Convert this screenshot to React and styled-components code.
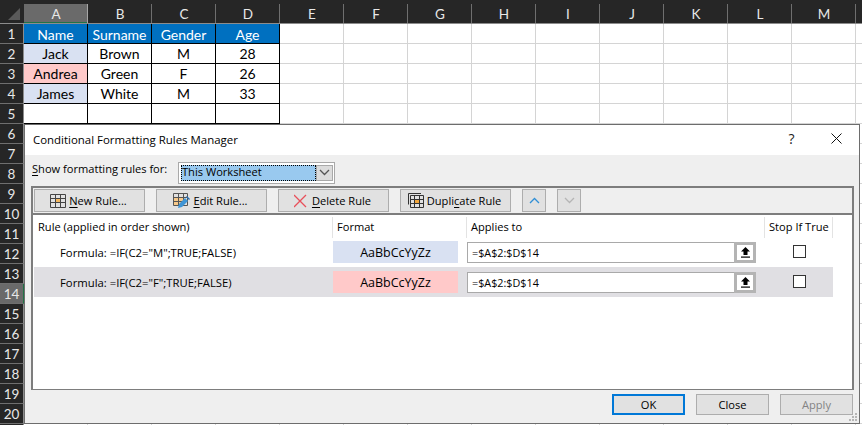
import React from "react";
import styled, { createGlobalStyle } from "styled-components";

const GlobalStyle = createGlobalStyle`
  html, body { margin: 0; padding: 0; background: #fff; overflow: hidden; }
  body { width: 862px; height: 425px; position: relative; font-family: "Open Sans", "Noto Sans", sans-serif; }
`;

const Sheet = styled.div`
  display: grid;
  grid-template-columns: 24px repeat(14, 64px);
  grid-template-rows: 24px repeat(21, 20px);
  width: 862px;
  height: 425px;
  overflow: hidden;
  background: #fff;
`;
const Corner = styled.div`
  background: #262626;
  border-bottom: 1px solid #8c8c8c;
  box-sizing: border-box;
  position: relative;
  &::after {
    content: "";
    position: absolute;
    right: 4px;
    bottom: 3px;
    border-style: solid;
    border-width: 0 0 12px 12px;
    border-color: transparent transparent #5a5a5a transparent;
  }
`;
const ColumnHead = styled.div`
  box-sizing: border-box;
  padding-top: 4px;
  background: #262626;
  border-bottom: 1px solid #8c8c8c;
  font-family: "Lato", sans-serif;
  font-size: 13.5px;
  color: #e8e8e8;
  display: flex;
  align-items: center;
  justify-content: center;
  position: relative;
  ${(p) => p.$active && `
    &::before {
      content: "";
      position: absolute;
      left: 0; right: 0; top: 4px; bottom: 0;
      background: #6a6a6a;
      border-bottom: 1px solid #217346;
    }
  `}
  &::after {
    content: "";
    position: absolute;
    right: 0;
    top: 4px;
    bottom: 0;
    width: 1px;
    background: ${(p) => (p.$active ? "#a6a6a6" : "#6f6f6f")};
  }
  span { position: relative; z-index: 1; }
`;
const RowHead = styled.div`
  background: ${(p) => (p.$active ? "#6a6a6a" : "#262626")};
  border-bottom: 1px solid #6f6f6f;
  border-right: 1px solid ${(p) => (p.$active ? "#217346" : "#8c8c8c")};
  box-sizing: border-box;
  font-family: "Lato", sans-serif;
  font-size: 13.5px;
  color: #e8e8e8;
  display: flex;
  align-items: center;
  justify-content: center;
`;
const Cell = styled.div`
  box-sizing: border-box;
  border-right: 1px solid ${(p) => (p.$table ? "#000" : "#d4d4d4")};
  border-bottom: 1px solid ${(p) => (p.$table ? "#000" : "#d4d4d4")};
  background: ${(p) => p.$bg || "#fff"};
  color: ${(p) => p.$color || "#000"};
  font-family: "Lato", sans-serif;
  font-size: 14px;
  padding-top: ${(p) => (p.$head ? 1 : 0)}px;
  display: flex;
  align-items: center;
  justify-content: center;
  white-space: nowrap;
`;

const Dialog = styled.div`
  position: absolute;
  left: 24px;
  top: 124px;
  width: 836px;
  height: 300px;
  box-sizing: border-box;
  border: 1px solid #6d6d6d;
  background: #efefef;
  font-size: 11.1px;
  color: #000;
  display: flex;
  flex-direction: column;
`;
const TitleBar = styled.div`
  height: 30px;
  flex: none;
  background: #fff;
  display: flex;
  align-items: center;
  padding-left: 8px;
  font-size: 11.45px;
`;
const Title = styled.div`
  flex: 1;
  position: relative;
  top: -1px;
`;
const TitleButton = styled.div`
  width: 45px;
  display: flex;
  align-items: center;
  justify-content: center;
  font-size: 14px;
  color: #222;
  padding-bottom: 4px;
  margin-left: ${(p) => (p.$help ? -1 : 0)}px;
`;
const DialogBody = styled.div`
  flex: 1;
  display: flex;
  flex-direction: column;
  padding: 0 5px 0 6px;
  position: relative;
`;
const ShowRow = styled.div`
  height: 31px;
  flex: none;
  display: flex;
  align-items: center;
  padding: 0 0 0 1px;
  gap: 21px;
`;
const Label = styled.span`
  width: 125px;
  white-space: nowrap;
  position: relative;
  top: -2px;
  u { text-underline-offset: 2px; }
`;
const Select = styled.div`
  width: 157px;
  height: 22px;
  box-sizing: border-box;
  border: 1px solid #a9a9a9;
  background: #fff;
  display: flex;
  padding: 2px 1px 2px 2px;
  position: relative;
  top: 2px;
`;
const SelectValue = styled.div`
  flex: 1;
  background: #99c9ef;
  outline: 1px dotted #000;
  outline-offset: -1px;
  padding: 0 0 2px 1px;
  display: flex;
  align-items: center;
`;
const SelectArrow = styled.div`
  width: 17px;
  background: #dcdcdc;
  border: 1px solid #a9a9a9;
  box-sizing: border-box;
  display: flex;
  align-items: center;
  justify-content: center;
`;
const RulesBox = styled.div`
  height: 204px;
  flex: none;
  box-sizing: border-box;
  border: 2px solid #7d7d7d;
  border-bottom-width: 1px;
  display: flex;
  flex-direction: column;
`;
const Toolbar = styled.div`
  height: 25px;
  flex: none;
  box-sizing: border-box;
  display: flex;
  align-items: flex-start;
  padding: 1px 0 0 1px;
  gap: 11px;
`;
const ToolButton = styled.div`
  width: 111px;
  height: 23px;
  box-sizing: border-box;
  border: 1px solid #adadad;
  background: #e1e1e1;
  display: flex;
  align-items: center;
  justify-content: center;
  gap: 3px;
  padding-right: 2px;
  white-space: nowrap;
  u { text-underline-offset: 2px; }
`;
const ArrowButton = styled(ToolButton)`
  width: 24px;
  padding-right: 0;
`;
const RuleList = styled.div`
  flex: 1;
  box-sizing: border-box;
  border-top: 2px solid #7d7d7d;
  background: #fff;
  padding: 2px 0 0 1px;
  display: flex;
  flex-direction: column;
`;
const ListRow = styled.div`
  display: grid;
  grid-template-columns: 299px 134px 298px 68px;
  width: 799px;
  box-sizing: border-box;
`;
const HeadRow = styled(ListRow)`
  height: 21px;
  margin-bottom: 2px;
`;
const HeadCell = styled.div`
  display: flex;
  align-items: center;
  padding-left: 4px;
  border-right: 1px solid #e3e3e3;
  white-space: nowrap;
  position: relative;
  span { position: relative; top: -1px; }
`;
const RuleRow = styled(ListRow)`
  height: ${(p) => p.$height}px;
  background: ${(p) => (p.$selected ? "#e0dfe3" : "#fff")};
  margin-bottom: ${(p) => (p.$selected ? 0 : 3)}px;
  align-items: center;
`;
const RuleText = styled.div`
  padding: 1px 0 0 26px;
  font-size: 11.3px;
  white-space: nowrap;
`;
const Swatch = styled.div`
  width: 125px;
  height: 22px;
  background: ${(p) => p.$bg};
  display: flex;
  align-items: center;
  justify-content: center;
  font-size: 12.5px;
`;
const RangeField = styled.div`
  width: 289px;
  height: 21px;
  box-sizing: border-box;
  border: 1px solid #a9a9a9;
  background: #fff;
  display: flex;
  align-items: center;
  padding-left: 4px;
  font-size: 10.8px;
`;
const RangeValue = styled.span`
  flex: 1;
`;
const RangeButton = styled.div`
  width: 22px;
  height: 21px;
  box-sizing: border-box;
  margin-right: -1px;
  border: 3px solid #b4b4b4;
  background: #fff;
  display: flex;
  align-items: center;
  justify-content: center;
`;
const CheckWrap = styled.div`
  display: flex;
  justify-content: center;
`;
const CheckBox = styled.div`
  width: 13px;
  height: 13px;
  box-sizing: border-box;
  border: 1px solid #333;
  background: #fff;
  position: relative;
  top: -1px;
`;
const Footer = styled.div`
  flex: 1;
  display: flex;
  justify-content: flex-end;
  align-items: flex-start;
  gap: 11px;
  padding: 4px 1px 0 0;
`;
const FooterButton = styled.div`
  width: 73px;
  height: 21px;
  box-sizing: border-box;
  border: ${(p) => (p.$primary ? "2px solid #0078d7" : "1px solid #adadad")};
  background: #e1e1e1;
  color: ${(p) => (p.$disabled ? "#838383" : "#000")};
  display: flex;
  align-items: center;
  justify-content: center;
`;
const Grip = styled.svg`
  position: absolute;
  right: 1px;
  bottom: 1px;
`;

const Chevron = ({ up, color }) => (
  <svg width="11" height="7" viewBox="0 0 11 7">
    <path d={up ? "M1 6L5.5 1.5L10 6" : "M1 1L5.5 5.5L10 1"} fill="none" stroke={color} strokeWidth="1.3" />
  </svg>
);

const TableIcon = () => (
  <svg width="16" height="14" viewBox="0 0 16 14">
    <rect x="5.5" y="4.5" width="5" height="4" fill="#f4b860" />
    <path d="M.5.5h15v13H.5zM.5 4.5h15M.5 8.5h15M5.5.5v13M10.5.5v13" fill="none" stroke="#444" />
  </svg>
);
const EditIcon = () => (
  <svg width="17" height="16" viewBox="0 0 17 16">
    <rect x="1" y="5" width="9" height="7" fill="#f7c98a" />
    <path d="M.5.5h14v12H.5zM.5 4.5h14M.5 8.5h14M5.5.5v12M10.5.5v12" fill="none" stroke="#555" />
    <path d="M5 15l1-4 6-6 3 3-6 6z" fill="#3f95d6" />
    <path d="M13 4l1-1 3 3-1 1z" fill="#2a6fb0" />
  </svg>
);
const DeleteIcon = () => (
  <svg width="15" height="14" viewBox="0 0 15 14">
    <path d="M0 1L12 13M12 1L0 13" fill="none" stroke="#e8505b" strokeWidth="1.3" />
  </svg>
);
const DuplicateIcon = () => (
  <svg width="16" height="15" viewBox="0 0 16 15">
    <path d="M.5 11.5V.5H13" fill="none" stroke="#333" />
    <rect x="6.5" y="6.5" width="5" height="4" fill="#f4a83c" />
    <path d="M2.5 2.5h13v12h-13zM2.5 6.5h13M2.5 10.5h13M6.5 2.5v12M11.5 2.5v12" fill="none" stroke="#333" />
  </svg>
);
const RangeIcon = () => (
  <svg width="9" height="11" viewBox="0 0 9 11">
    <path d="M4.5 0L9 4.5H6.5V8h-4V4.5H0z" fill="#000" />
    <rect x="0" y="9.5" width="9" height="1.2" fill="#000" />
  </svg>
);
const CloseIcon = () => (
  <svg width="11" height="11" viewBox="0 0 11 11">
    <path d="M.5.5L10.5 10.5M10.5.5L.5 10.5" fill="none" stroke="#111" strokeWidth="1" />
  </svg>
);

const COLUMNS = "ABCDEFGHIJKLM".split("");
const TABLE = [
  ["Name", "Surname", "Gender", "Age"],
  ["Jack", "Brown", "M", "28"],
  ["Andrea", "Green", "F", "26"],
  ["James", "White", "M", "33"],
  ["", "", "", ""],
];
const RULES = [
  { formula: '=IF(C2="M";TRUE;FALSE)', bg: "#d9e1f2", height: 24 },
  { formula: '=IF(C2="F";TRUE;FALSE)', bg: "#ffc9c9", height: 30, selected: true },
];

const cellProps = (row, col) => {
  if (row === 0) return { $bg: "#0070c0", $color: "#fff", $head: true };
  if (col === 0 && (row === 1 || row === 3)) return { $bg: "#d9e1f2" };
  if (col === 0 && row === 2) return { $bg: "#ffc9c9" };
  return {};
};

export default function App() {
  const rows = Array.from({ length: 21 }, (_, i) => i);
  return (
    <>
      <GlobalStyle />
      <Sheet>
        <Corner />
        {COLUMNS.map((c, i) => (
          <ColumnHead key={c} $active={i === 0}>
            <span>{c}</span>
          </ColumnHead>
        ))}
        <ColumnHead />
        {rows.map((r) => (
          <React.Fragment key={r}>
            {/* row 21 is only a sliver at the bottom edge, no number fits */}
            <RowHead $active={r === 13}>{r < 20 ? r + 1 : ""}</RowHead>
            {Array.from({ length: 14 }, (_, c) => {
              const inTable = r < 5 && c < 4;
              return (
                <Cell key={c} $table={inTable} {...(inTable ? cellProps(r, c) : {})}>
                  {inTable ? TABLE[r][c] : ""}
                </Cell>
              );
            })}
          </React.Fragment>
        ))}
      </Sheet>
      <Dialog>
        <TitleBar>
          <Title>Conditional Formatting Rules Manager</Title>
          <TitleButton $help>?</TitleButton>
          <TitleButton>
            <CloseIcon />
          </TitleButton>
        </TitleBar>
        <DialogBody>
          <ShowRow>
            <Label>
              <u>S</u>how formatting rules for:
            </Label>
            <Select>
              <SelectValue>This Worksheet</SelectValue>
              <SelectArrow>
                <Chevron color="#555" />
              </SelectArrow>
            </Select>
          </ShowRow>
          <RulesBox>
            <Toolbar>
              <ToolButton>
                <TableIcon />
                <span>
                  <u>N</u>ew Rule...
                </span>
              </ToolButton>
              <ToolButton>
                <EditIcon />
                <span>
                  <u>E</u>dit Rule...
                </span>
              </ToolButton>
              <ToolButton>
                <DeleteIcon />
                <span>
                  <u>D</u>elete Rule
                </span>
              </ToolButton>
              <ToolButton>
                <DuplicateIcon />
                <span>
                  Dupli<u>c</u>ate Rule
                </span>
              </ToolButton>
              <ArrowButton>
                <Chevron up color="#2f8fd6" />
              </ArrowButton>
              <ArrowButton>
                <Chevron color="#b5b5b5" />
              </ArrowButton>
            </Toolbar>
            <RuleList>
              <HeadRow>
                <HeadCell><span>Rule (applied in order shown)</span></HeadCell>
                <HeadCell><span>Format</span></HeadCell>
                <HeadCell><span>Applies to</span></HeadCell>
                <HeadCell><span>Stop If True</span></HeadCell>
              </HeadRow>
              {RULES.map((rule) => (
                <RuleRow key={rule.formula} $height={rule.height} $selected={rule.selected}>
                  <RuleText>Formula: {rule.formula}</RuleText>
                  <Swatch $bg={rule.bg}>AaBbCcYyZz</Swatch>
                  <RangeField>
                    <RangeValue>=$A$2:$D$14</RangeValue>
                    <RangeButton>
                      <RangeIcon />
                    </RangeButton>
                  </RangeField>
                  <CheckWrap>
                    <CheckBox />
                  </CheckWrap>
                </RuleRow>
              ))}
            </RuleList>
          </RulesBox>
          <Footer>
            <FooterButton $primary>OK</FooterButton>
            <FooterButton>Close</FooterButton>
            <FooterButton $disabled>Apply</FooterButton>
          </Footer>
          <Grip width="9" height="9" viewBox="0 0 9 9">
            <path d="M6 0h2v2H6zM3 3h2v2H3zM6 3h2v2H6zM0 6h2v2H0zM3 6h2v2H3zM6 6h2v2H6z" fill="#b5b5b5" />
          </Grip>
        </DialogBody>
      </Dialog>
    </>
  );
}
